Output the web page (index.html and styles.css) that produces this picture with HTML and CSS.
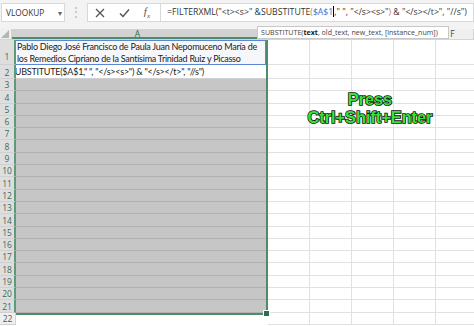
FILE: index.html
```html
<!DOCTYPE html>
<html lang="en">
<head>
    <meta charset="UTF-8">
    <title>Excel FILTERXML</title>
    <link rel="stylesheet" href="styles.css">
</head>
<body>

<div class="app">
    <!-- Name box + formula bar -->
    <div class="toolbar">
        <div class="namebox"><span>VLOOKUP</span><span class="caret">&#9662;</span></div>
        <div class="grip">&#8942;</div>
        <div class="fbtns">
            <svg width="10" height="10" viewBox="0 0 10 10"><path d="M1 1 L9 9 M9 1 L1 9" stroke="#555" stroke-width="1.3" fill="none"/></svg>
            <svg width="11" height="10" viewBox="0 0 11 10"><path d="M1 5.5 L4 8.5 L10 1.5" stroke="#555" stroke-width="1.5" fill="none"/></svg>
            <span class="fx">f<sub>x</sub></span>
        </div>
        <div class="formula">=FILTERXML("&lt;t&gt;&lt;s&gt;" &amp;SUBSTITUTE<span class="par">(</span><span class="ref">$A$1</span><span class="caretline"></span>," ", "&lt;/s&gt;&lt;s&gt;"<span class="par">)</span> &amp; "&lt;/s&gt;&lt;/t&gt;", "//s")</div>
    </div>

    <div class="sheet">
        <!-- B..E headers sit under the tooltip -->
        <div class="head">
            <div class="corner"><svg width="8" height="8" viewBox="0 0 8 8"><path d="M8 0 L8 8 L0 8 Z" fill="#b5b5b5"/></svg></div>
            <div class="ch sel">A</div>
            <div class="ch"></div>
            <div class="ch"></div>
            <div class="ch"></div>
            <div class="ch"></div>
            <div class="ch">F</div>
        </div>

        <div class="body">
            <div class="rowheads">
                <div class="rh on">1</div><div class="rh on">2</div><div class="rh on">3</div><div class="rh on">4</div>
                <div class="rh on">5</div><div class="rh on">6</div><div class="rh on">7</div><div class="rh on">8</div>
                <div class="rh on">9</div><div class="rh on">10</div><div class="rh on">11</div><div class="rh on">12</div>
                <div class="rh on">13</div><div class="rh on">14</div><div class="rh on">15</div><div class="rh on">16</div>
                <div class="rh on">17</div><div class="rh on">18</div><div class="rh on">19</div><div class="rh on">20</div>
                <div class="rh on">21</div><div class="rh">22</div>
            </div>

            <div class="cola">
                <div class="selbox">
                    <div class="cell name">Pablo Diego José Francisco de Paula Juan Nepomuceno María de los Remedios Cipriano de la Santísima Trinidad Ruiz y Picasso</div>
                    <div class="cell edit"><span>=FILTERXML("&lt;t&gt;&lt;s&gt;" &amp;SUBSTITUTE($A$1," ", "&lt;/s&gt;&lt;s&gt;") &amp; "&lt;/s&gt;&lt;/t&gt;", "//s")</span></div>
                    <div class="cell"></div><div class="cell"></div><div class="cell"></div><div class="cell"></div>
                    <div class="cell"></div><div class="cell"></div><div class="cell"></div><div class="cell"></div>
                    <div class="cell"></div><div class="cell"></div><div class="cell"></div><div class="cell"></div>
                    <div class="cell"></div><div class="cell"></div><div class="cell"></div><div class="cell"></div>
                    <div class="cell"></div><div class="cell"></div><div class="cell"></div>
                    <div class="handle"></div>
                </div>
                <div class="cell blank"></div>
            </div>

            <div class="rest">
                <div></div><div></div><div></div><div></div><div></div><div></div>
                <div></div><div></div><div></div><div></div><div></div><div></div>
                <div></div><div></div><div></div><div></div><div></div><div></div>
                <div></div><div></div><div></div><div></div>
            </div>
        </div>

        <div class="tip">SUBSTITUTE(<b>text</b>, old_text, new_text, [instance_num])</div>
        <div class="press">Press<br>Ctrl+Shift+Enter</div>
    </div>
</div>

</body>
</html>
```

FILE: styles.css
```css
body {
    margin: 0;
    font-family: "Liberation Sans", Arial, sans-serif;
    background: #fff;
}
.app {
    width: 474px;
    height: 326px;
    overflow: hidden;
    position: relative;
}

/* formula bar */
.toolbar {
    height: 29px;
    box-sizing: border-box;
    padding-top: 3px;
    background: #f3f3f3;
    display: flex;
    align-items: flex-start;
}
.namebox {
    width: 64px;
    height: 19px;
    margin-left: 1px;
    box-sizing: border-box;
    background: #fff;
    border: 1px solid #d8d8d8;
    display: flex;
    align-items: center;
    justify-content: space-between;
    padding: 0 2px 0 4px;
    font-family: "Open Sans", sans-serif;
    font-size: 8.3px;
    color: #333;
}
.caret {
    font-size: 8px;
    color: #666;
}
.grip {
    width: 22px;
    text-align: center;
    color: #b8b8b8;
    font-size: 12px;
    line-height: 19px;
}
.fbtns {
    width: 73px;
    height: 19px;
    box-sizing: border-box;
    background: #fff;
    border: 1px solid #d8d8d8;
    border-right: none;
    display: flex;
    align-items: center;
    justify-content: space-between;
    padding: 0 10px 0 7px;
}
.fx {
    font-family: "Liberation Serif", serif;
    font-style: italic;
    font-size: 11px;
    color: #555;
}
.fx sub {
    font-size: 7px;
}
.formula {
    flex: 1;
    height: 19px;
    box-sizing: border-box;
    background: #fff;
    border: 1px solid #d8d8d8;
    padding-left: 6px;
    font-family: "Open Sans", sans-serif;
    font-size: 8.7px;
    line-height: 17px;
    color: #333;
    white-space: nowrap;
    overflow: hidden;
}
.ref {
    color: #3d6fcc;
}
.par {
    color: #d07a2a;
}
.caretline {
    display: inline-block;
    width: 1px;
    height: 11px;
    background: #000;
    vertical-align: -2px;
}

/* sheet */
.sheet {
    position: relative;
}
.head {
    display: flex;
    height: 11px;
    background: #efefef;
    border-bottom: 1px solid #d4d4d4;
    box-sizing: border-box;
}
.corner {
    width: 16px;
    display: flex;
    align-items: flex-end;
    justify-content: flex-end;
    padding: 0 2px 1px 0;
    box-sizing: border-box;
    border-right: 1px solid #d4d4d4;
}
.ch {
    width: 42px;
    flex-shrink: 0;
    box-sizing: border-box;
    border-right: 1px solid #d4d4d4;
    text-align: center;
    font-family: "Open Sans", sans-serif;
    font-size: 8.5px;
    line-height: 10px;
    color: #444;
}
.ch.sel {
    width: 252px;
    background: #d2d2d2;
    border-bottom: 2px solid #4f8a6b;
    color: #2e6b4c;
}

.body {
    display: flex;
}
.rowheads {
    width: 16px;
    flex-shrink: 0;
}
.rh {
    height: 12.3px;
    box-sizing: border-box;
    border-bottom: 1px solid #d0d0d0;
    background: #f0f0f0;
    border-right: 1px solid #d4d4d4;
    display: flex;
    align-items: flex-end;
    justify-content: center;
    font-family: "Open Sans", sans-serif;
    font-size: 8.5px;
    line-height: 11px;
    color: #555;
}
.rh.on {
    background: #dedede;
    border-right: 2px solid #5c9a7a;
    color: #3f6a55;
}
.rh:nth-child(1) {
    height: 25px;
    padding-bottom: 2px;
}
.rh:nth-child(2) {
    height: 14px;
}

.cola {
    width: 252px;
    flex-shrink: 0;
}
.selbox {
    position: relative;
    border: 1px solid #4f8a6b;
    border-left: none;
    border-top: none;
    border-right-width: 2px;
    border-bottom-width: 2px;
}
.cell {
    height: 12.3px;
    box-sizing: border-box;
    background: #c6c6c6;
    border-bottom: 1px solid #b0b0b0;
}
.cell:last-of-type {
    border-bottom: none;
}
.cell.name {
    height: 25px;
    background: #f5f7fb;
    border: 1px solid #5a86d2;
    border-left: none;
    padding: 0 0 0 1px;
    font-family: "Lato", sans-serif;
    font-size: 9px;
    letter-spacing: -0.25px;
    line-height: 12px;
    color: #222;
    overflow: hidden;
}
.cell.edit {
    height: 14px;
    background: #fff;
    border-bottom: 1px solid #d0d0d0;
    display: flex;
    justify-content: flex-end;
    overflow: hidden;
    padding-right: 62px;
    font-family: "Lato", sans-serif;
    font-size: 9px;
    letter-spacing: -0.25px;
    line-height: 13px;
    color: #222;
}
.cell.edit span {
    flex-shrink: 0;
    white-space: nowrap;
}
.cell.blank {
    background: #fff;
    border-bottom: 1px solid #e0e0e0;
}
.handle {
    position: absolute;
    right: -4px;
    bottom: -4px;
    width: 5px;
    height: 5px;
    background: #2f6e4f;
    border: 1px solid #fff;
}

.rest {
    flex: 1;
}
.rest div {
    height: 12.3px;
    box-sizing: border-box;
    border-bottom: 1px solid #e1e1e1;
    background: repeating-linear-gradient(to right, transparent 0, transparent 41px, #e1e1e1 41px, #e1e1e1 42px);
}
.rest div:nth-child(1) {
    height: 25px;
}
.rest div:nth-child(2) {
    height: 14px;
}

/* overlays */
.tip {
    position: absolute;
    left: 257px;
    top: -3px;
    width: 192px;
    height: 13px;
    box-sizing: border-box;
    background: #fff;
    border: 1px solid #c8c8c8;
    padding-left: 3px;
    font-family: "Open Sans", sans-serif;
    font-size: 7.1px;
    line-height: 11px;
    color: #444;
    white-space: nowrap;
    overflow: hidden;
}
.tip b {
    color: #222;
}
.press {
    position: absolute;
    left: 295px;
    top: 61px;
    width: 150px;
    text-align: center;
    font-family: "Liberation Sans", Arial, sans-serif;
    font-weight: bold;
    font-size: 16.3px;
    line-height: 18px;
    color: #3ae03f;
    -webkit-text-stroke: 1.6px #111;
    paint-order: stroke fill;
}
```
